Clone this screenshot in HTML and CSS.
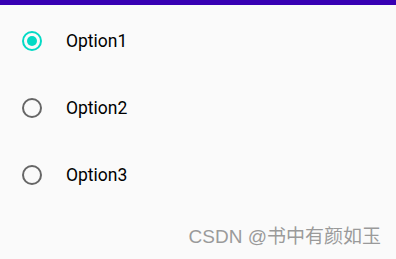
FILE: index.html
```html
<!DOCTYPE html>
<html lang="en">
<head>
    <meta charset="UTF-8">
    <title>RadioGroup</title>
    <link rel="stylesheet" href="styles.css">
</head>
<body>
    <div class="status-bar"></div>
    <div class="radio-group">
        <label class="radio-row">
            <span class="radio checked"></span>
            <span class="label">Option1</span>
        </label>
        <label class="radio-row">
            <span class="radio"></span>
            <span class="label">Option2</span>
        </label>
        <label class="radio-row">
            <span class="radio"></span>
            <span class="label">Option3</span>
        </label>
    </div>
    <div class="watermark">CSDN @书中有颜如玉</div>
</body>
</html>
```

FILE: styles.css
```css
body {
    margin: 0;
    width: 396px;
    height: 259px;
    overflow: hidden;
    background-color: #fafafa;
    font-family: Roboto, "Noto Sans CJK SC", sans-serif;
    position: relative;
}
.status-bar {
    height: 5px;
    background-color: #3700b3;
}
.radio-group {
    display: flex;
    flex-direction: column;
    padding-top: 2px;
}
.radio-row {
    display: flex;
    align-items: center;
    height: 67px;
    padding-left: 22px;
}
.radio {
    box-sizing: border-box;
    width: 20px;
    height: 20px;
    border: 2px solid #666666;
    border-radius: 50%;
    display: flex;
    align-items: center;
    justify-content: center;
}
.radio.checked {
    border-color: #03dac5;
}
.radio.checked::after {
    content: "";
    width: 10px;
    height: 10px;
    border-radius: 50%;
    background-color: #03dac5;
}
.label {
    margin-left: 24px;
    font-size: 17.5px;
    color: #000000;
}
.watermark {
    position: absolute;
    right: 15px;
    bottom: 11px;
    font-family: "Liberation Sans", "Noto Sans CJK SC", sans-serif;
    font-size: 19px;
    color: #9a9a9a;
}
```
